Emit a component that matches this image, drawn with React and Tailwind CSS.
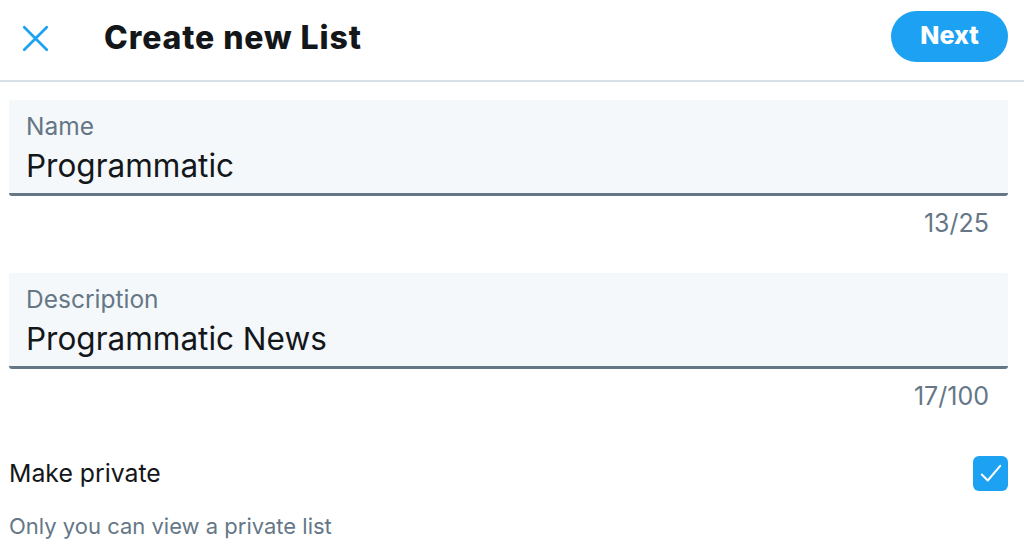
import React from 'react';

const Field = ({ label, value, count }) => (
  <div className="flex flex-col">
    <div className="bg-[#f5f8fa] rounded-t-[2px] rounded-b-[3px] border-b-[3px] border-[#657786] h-[96px] pl-[17px] pt-[11px]">
      <div className="text-[24.5px] leading-[30px] text-[#657786]">{label}</div>
      <div className="text-[31.5px] leading-[40px] text-[#14171a] mt-[5px]">{value}</div>
    </div>
    <div className="text-right text-[25px] leading-[30px] text-[#657786] pr-[19px] mt-[12px]">{count}</div>
  </div>
);

const App = () => {
  return (
    <div className="w-[1024px] h-[558px] bg-white overflow-hidden font-['Inter',sans-serif]">
      <div className="h-[82px] flex items-center border-b-2 border-[#d7e0e6] pl-[22px] pr-[16px]">
        <svg width="27" height="27" viewBox="0 0 24 24" className="text-[#1da1f2] mb-[4px]">
          <path d="M2 2L22 22M22 2L2 22" stroke="currentColor" strokeWidth="2.4" strokeLinecap="round" />
        </svg>
        <h1 className="ml-[55px] text-[32px] font-extrabold text-[#14171a] tracking-[0.9px] mb-[4px]">Create new List</h1>
        <button className="ml-auto h-[51px] w-[117px] rounded-full bg-[#1da1f2] text-white text-[25px] font-extrabold mb-[8px]">
          Next
        </button>
      </div>
      <div className="px-[9px] pr-[16px] pt-[18px]">
        <Field label="Name" value="Programmatic" count="13/25" />
        <div className="mt-[35px]">
          <Field label="Description" value="Programmatic News" count="17/100" />
        </div>
        <div className="flex items-center justify-between mt-[44px]">
          <span className="text-[24.8px] text-[#14171a]">Make private</span>
          <div className="w-[35px] h-[35px] rounded-[6px] bg-[#1da1f2] flex items-center justify-center">
            <svg width="26" height="26" viewBox="0 0 24 24">
              <path d="M3.5 12.5L9 18L20.5 4.5" fill="none" stroke="white" strokeWidth="1.9" strokeLinecap="round" strokeLinejoin="round" />
            </svg>
          </div>
        </div>
        <div className="text-[22px] text-[#657786] mt-[18px]">Only you can view a private list</div>
      </div>
    </div>
  );
};

export default App;
